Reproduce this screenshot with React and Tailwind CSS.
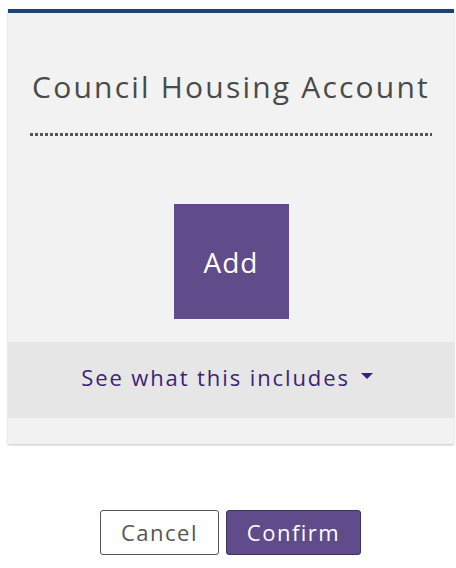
import React from 'react';

const font = { fontFamily: '"Open Sans", "Liberation Sans", sans-serif' };

const PlanCard = () => (
  <div className="ml-[8px] mt-[9px] w-[446px] bg-[#f2f2f2] border-t-4 border-[#1d4477] shadow-[0_1px_2px_rgba(0,0,0,0.25)]">
    {/* Title */}
    <div className="px-[22px] pt-[54px]">
      <h2 className="text-center text-[30px] leading-[40px] text-[#4a4a4a] tracking-[2.2px] whitespace-nowrap">Council Housing Account</h2>
      <div className="mt-[26px] h-[3px] bg-[linear-gradient(90deg,#555_0_3px,transparent_3px_5px)] bg-[length:5px_3px]" />
    </div>

    {/* Add button */}
    <div className="flex justify-center pt-[68px] pb-[23px]">
      <button className="w-[115px] h-[115px] bg-[#604b8b] text-white text-[28px] tracking-[1px]">Add</button>
    </div>

    {/* Includes toggle */}
    <div className="h-[76px] bg-[#e6e6e6] flex items-center justify-center gap-[11px] pb-[6px] pr-[8px]">
      <span className="text-[22px] text-[#3d1f78] tracking-[1.9px]">See what this includes</span>
      <span className="w-0 h-0 border-l-[6px] border-r-[6px] border-t-[6px] border-l-transparent border-r-transparent border-t-[#3d1f78] mb-[2px]" />
    </div>
    <div className="h-[26px]" />
  </div>
);

export default function App() {
  return (
    <div style={font} className="w-[456px] h-[568px] bg-white">
      <PlanCard />
      <div className="flex justify-center gap-[7px] mt-[66px] pl-[5px]">
        <button className="w-[119px] h-[45px] border border-[#555] rounded-[3px] bg-white text-[22px] text-[#555] tracking-[1.5px]">Cancel</button>
        <button className="w-[135px] h-[45px] border border-[#3f3160] rounded-[3px] bg-[#604b8b] text-[22px] text-white tracking-[1.5px]">Confirm</button>
      </div>
    </div>
  );
}
